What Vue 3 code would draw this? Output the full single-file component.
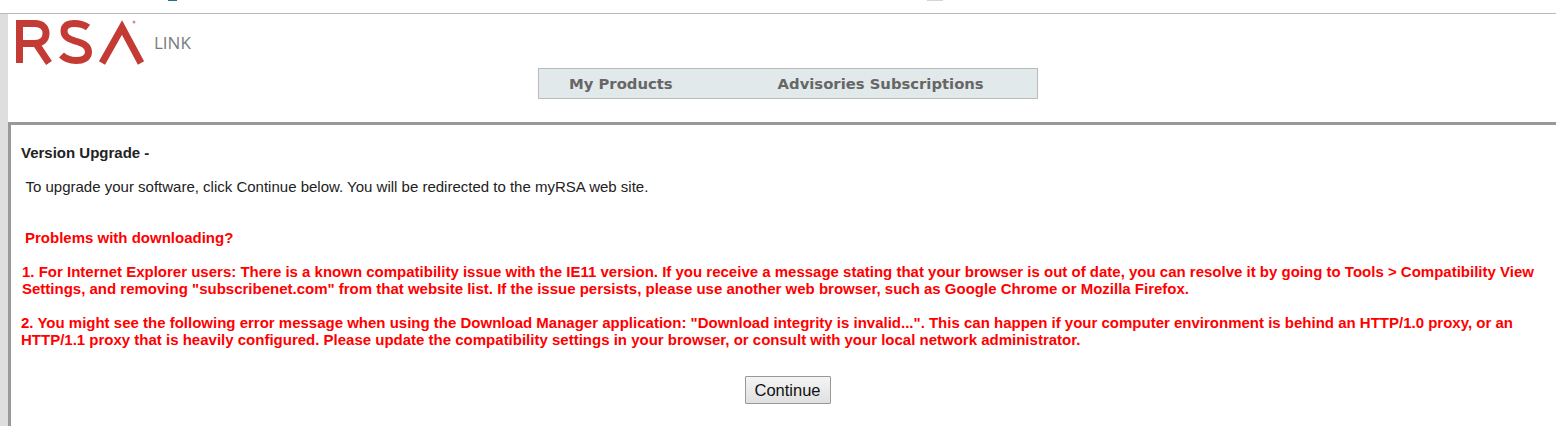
<template>
  <div class="page">
    <div class="topbar">
      <span class="cut cut-teal"></span>
      <span class="cut cut-gray"></span>
    </div>
    <div class="shell">
      <div class="gutter"></div>
      <div class="main">
        <header class="head">
          <div class="brand">
            <svg class="logo" width="134" height="48" viewBox="0 0 134 48" aria-label="RSA">
              <g fill="none" stroke="#c43b35" stroke-width="7">
                <path d="M5.500 45V5.500H21C28 5.500 32 9.500 32 15.500C32 21.500 28 25.500 21 25.500H6M22 25.500L35 45" />
                <path d="M74 9.500C70 6.500 65 5.500 60 5.500C53 5.500 50 8.500 50 13C50 19 55 21 61 23C68 25 74.500 27 74.500 34C74.500 40 69 42.500 62 42.500C56 42.500 51 40.500 47.500 37" />
                <path d="M88 45L108 9.500L127 45" />
              </g>
              <circle cx="120" cy="4" r="1.500" fill="#dd8f8b" />
            </svg>
            <span class="link-word">LINK</span>
          </div>
          <nav class="nav">
            <a class="nav-item first">My Products</a>
            <a class="nav-item">Advisories Subscriptions</a>
          </nav>
        </header>

        <section class="content">
          <h1 class="title">Version Upgrade -</h1>
          <p class="lead">To upgrade your software, click Continue below. You will be redirected to the myRSA web site.</p>
          <p class="warn warn-head">Problems with downloading?</p>
          <p class="warn warn-one">
            1. For Internet Explorer users: There is a known compatibility issue with the IE11 version. If you receive a message stating that your browser is out of date, you can resolve it by going to Tools &gt; Compatibility View<br />
            Settings, and removing "subscribenet.com" from that website list. If the issue persists, please use another web browser, such as Google Chrome or Mozilla Firefox.
          </p>
          <p class="warn warn-two">
            2. You might see the following error message when using the Download Manager application: "Download integrity is invalid...". This can happen if your computer environment is behind an HTTP/1.0 proxy, or an<br />
            HTTP/1.1 proxy that is heavily configured. Please update the compatibility settings in your browser, or consult with your local network administrator.
          </p>
          <div class="actions">
            <button class="continue" type="button">Continue</button>
          </div>
        </section>
      </div>
    </div>
  </div>
</template>

<script setup>
</script>

<style>
html, body {
  margin: 0;
  background: #fff;
  overflow: hidden;
}
</style>

<style scoped>
.page {
  width: 1556px;
  height: 426px;
  overflow: hidden;
  font-family: "Liberation Sans", Arial, sans-serif;
  font-size: 15px;
  color: #222;
}
.topbar {
  height: 13px;
  display: flex;
  align-items: flex-start;
  border-bottom: 1px solid #bbb;
}
.cut {
  display: block;
}
.cut-teal {
  width: 9px;
  height: 1px;
  margin-left: 168px;
  background: #1f7391;
}
.cut-gray {
  width: 16px;
  height: 1px;
  margin-left: 750px;
  background: #d4d4d4;
}
.shell {
  display: flex;
  height: 412px;
}
.gutter {
  flex: 0 0 8px;
  background: #dedede;
}
.main {
  flex: 0 0 1560px;
}
.head {
  height: 108px;
  box-sizing: border-box;
  padding-top: 4px;
}
.brand {
  display: flex;
  align-items: flex-start;
  height: 50px;
  padding-left: 6px;
}
.logo {
  display: block;
  filter: blur(0.4px);
}
.link-word {
  margin-left: 6px;
  margin-top: 13px;
  font-family: "Open Sans", sans-serif;
  font-size: 17px;
  line-height: 24px;
  color: #777b7f;
}
.nav {
  box-sizing: border-box;
  width: 500px;
  height: 31px;
  margin: 0 auto;
  display: flex;
  align-items: center;
  padding-left: 30px;
  background: #e2e9eb;
  border: 1px solid #bbb;
}
.nav-item {
  font-family: "DejaVu Sans", Verdana, sans-serif;
  font-weight: 700;
  font-size: 14.800px;
  color: #666;
}
.nav-item.first {
  margin-right: 105px;
}
.content {
  height: 304px;
  box-sizing: border-box;
  border-top: 3px solid #999;
  border-left: 3px solid #999;
  padding: 19px 14px 0 10px;
}
.title {
  margin: 0;
  font-size: 15px;
  line-height: 17px;
  font-weight: 700;
  color: #222;
}
.lead {
  margin: 17px 0 0 4.500px;
  line-height: 17px;
}
.warn {
  margin: 0;
  color: #f00;
  font-weight: 700;
  line-height: 17px;
}
.warn-head {
  margin: 34px 0 0 4px;
}
.warn-one {
  margin-top: 17px;
  margin-left: 1px;
}
.warn-two {
  margin-top: 17px;
}
.actions {
  margin-top: 28px;
  display: flex;
  justify-content: center;
}
.continue {
  box-sizing: border-box;
  width: 86px;
  height: 28px;
  padding: 0;
  font-family: "Liberation Sans", Arial, sans-serif;
  font-size: 16.500px;
  color: #111;
  background: linear-gradient(#f4f4f4, #e0e0e0);
  border: 1px solid #999;
  border-radius: 1px;
}
</style>
